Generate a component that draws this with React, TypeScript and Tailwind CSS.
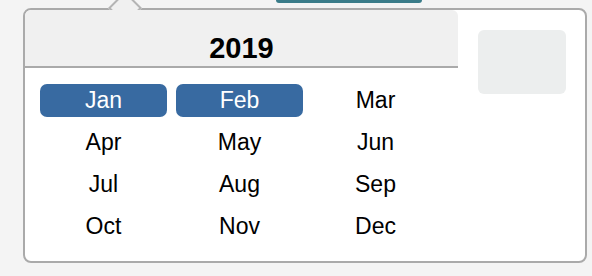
import React from "react"

const months = ["Jan", "Feb", "Mar", "Apr", "May", "Jun", "Jul", "Aug", "Sep", "Oct", "Nov", "Dec"]
const selected = ["Jan", "Feb"]

export default function App() {
  return (
    <div
      className="h-[276px] w-[592px] overflow-hidden bg-[#f4f4f4] text-black"
      style={{ fontFamily: '"Liberation Sans", Arial, sans-serif' }}
    >
      {/* input sitting above the popup, mostly off screen */}
      <div className="ml-[276px] h-[3px] w-[146px] rounded-b-[6px] bg-[#3a7c89]" />

      <div className="relative ml-[23px] mt-[5px] h-[255px] w-[564px] rounded-[8px] border-2 border-[#aaaaaa] bg-white">
        {/* caret */}
        <div className="absolute left-[88px] top-[-14px] z-[5] h-[24px] w-[24px] rotate-45 border-2 border-[#b4b4b4] bg-[#f0f0f0]" />

        <div className="flex">
          <div className="w-[433px]">
            <div className="relative z-10 flex h-[58px] justify-center rounded-t-[6px] border-b-2 border-[#aaaaaa] bg-[#f0f0f0] pt-[22px]">
              <span className="text-[29px] font-bold leading-[32px]">2019</span>
            </div>

            <div className="mt-[16px] grid grid-cols-[127px_127px_127px] gap-x-[9px] gap-y-[9px] pl-[15px]">
              {months.map((m) => {
                const on = selected.includes(m)
                return (
                  <div
                    key={m}
                    className={
                      on
                        ? "flex h-[33px] items-center justify-center rounded-[7px] bg-[#386aa1] text-[23px] text-white"
                        : "flex h-[33px] items-center justify-center rounded-[7px] text-[23px]"
                    }
                  >
                    {m}
                  </div>
                )
              })}
            </div>
          </div>

          <div className="ml-[20px] mt-[20px] h-[64px] w-[88px] rounded-[6px] bg-[#eceeee]" />
        </div>
      </div>
    </div>
  )
}
